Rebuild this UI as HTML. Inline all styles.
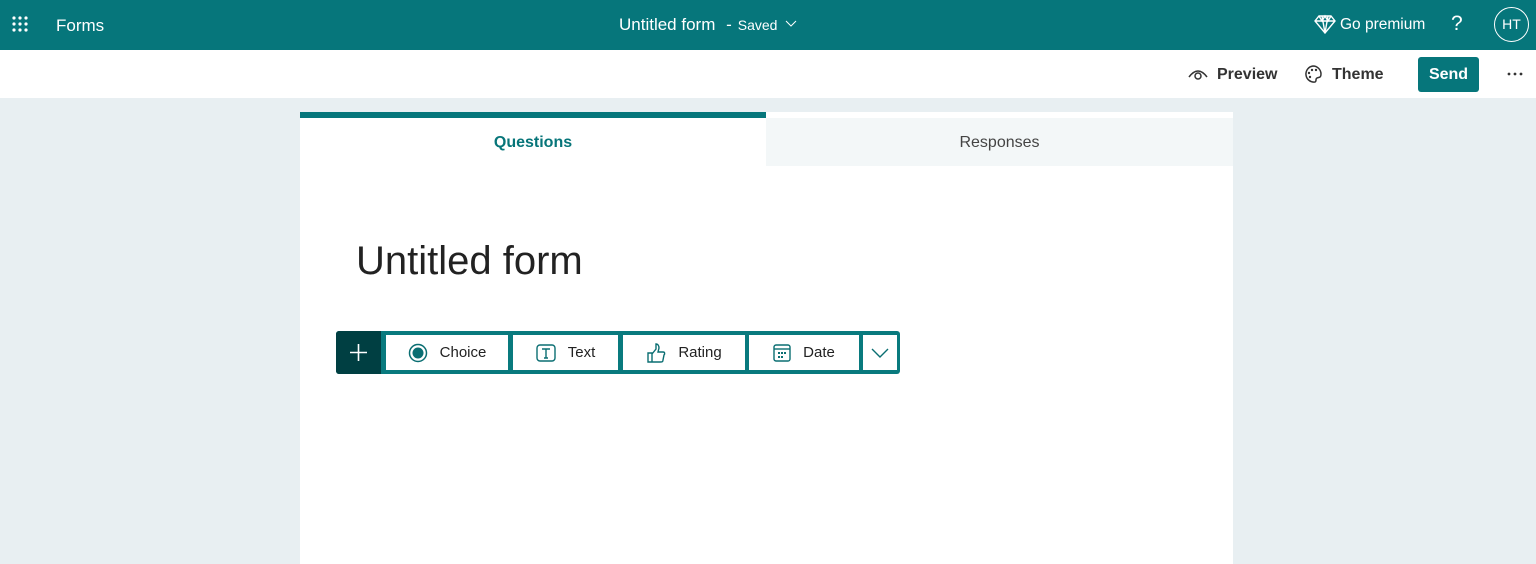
<!DOCTYPE html>
<html><head><style>
*{box-sizing:border-box;margin:0;padding:0}
body{width:1536px;height:564px;overflow:hidden;background:#e8eff2;font-family:"Liberation Sans",sans-serif;position:relative}
.top{position:absolute;left:0;top:0;width:1536px;height:50px;background:#06767b;color:#fff}
.t{position:absolute;white-space:nowrap}
.bar2{position:absolute;left:0;top:50px;width:1536px;height:48px;background:#fff}
.card{position:absolute;left:300px;top:112px;width:933px;height:452px;background:#fff}
.tb{position:absolute;left:336px;top:331px;width:564px;height:43px;background:#097a7e;border-radius:3px}
.btn{position:absolute;top:4px;height:35px;background:#fff;font-size:15px;color:#222;display:flex;align-items:center;justify-content:center;gap:12px}
</style></head><body>
<div class="top">
<svg class="t" style="left:11px;top:15px" width="18" height="18"><g fill="#fff"><circle cx="3" cy="3" r="1.6"/><circle cx="9" cy="3" r="1.6"/><circle cx="15" cy="3" r="1.6"/><circle cx="3" cy="9" r="1.6"/><circle cx="9" cy="9" r="1.6"/><circle cx="15" cy="9" r="1.6"/><circle cx="3" cy="15" r="1.6"/><circle cx="9" cy="15" r="1.6"/><circle cx="15" cy="15" r="1.6"/></g></svg>
<div class="t" style="left:56px;top:16px;font-size:17px">Forms</div>
<div class="t" style="left:619px;top:15px;font-size:17px">Untitled form <span style="margin:0 6px">-</span><span style="font-size:14px">Saved</span></div>
<svg class="t" style="left:785px;top:20px" width="12" height="8"><path d="M1 1l5 5 5-5" stroke="#fff" fill="none"/></svg>
<svg class="t" style="left:1314px;top:14px" width="22" height="20"><path d="M5 2h12l4 5-10 12L1 7z M1 7h20 M8 2l3 17 3-17 M5 2l3 5 3-5 3 5 3-5" stroke="#fff" stroke-width="1.4" fill="none"/></svg>
<div class="t" style="left:1340px;top:16px;font-size:15.5px">Go premium</div>
<div class="t" style="left:1451px;top:12px;font-size:21px">?</div>
<div class="t" style="left:1494px;top:7px;width:35px;height:35px;border:1.5px solid #fff;border-radius:50%;font-size:14px;text-align:center;line-height:32px">HT</div>
</div>
<div class="bar2">
<svg class="t" style="left:1188px;top:18px" width="20" height="12"><path d="M1 9Q10-3 19 9" stroke="#333" stroke-width="1.5" fill="none"/><circle cx="10" cy="8" r="3" stroke="#333" stroke-width="1.5" fill="none"/></svg>
<div class="t" style="left:1217px;top:16px;font-size:16px;font-weight:bold;color:#333">Preview</div>
<svg class="t" style="left:1303px;top:14px" width="20" height="20"><path d="M10 2a8 8 0 1 0 2 16c2-1 0-3 2-4s4 0 4-4a8 8 0 0 0-8-8z" stroke="#333" stroke-width="1.5" fill="none"/><circle cx="6" cy="9" r="1.2" fill="#333"/><circle cx="9" cy="6" r="1.2" fill="#333"/><circle cx="13" cy="6" r="1.2" fill="#333"/><circle cx="7" cy="13" r="1.2" fill="#333"/></svg>
<div class="t" style="left:1332px;top:16px;font-size:16px;font-weight:bold;color:#333">Theme</div>
<div class="t" style="left:1418px;top:7px;width:61px;height:35px;background:#06767b;border-radius:3px;color:#fff;font-weight:bold;font-size:16px;text-align:center;line-height:35px">Send</div>
<svg class="t" style="left:1507px;top:22px" width="16" height="4"><g fill="#333"><circle cx="2" cy="2" r="1.4"/><circle cx="8" cy="2" r="1.4"/><circle cx="14" cy="2" r="1.4"/></g></svg>
</div>
<div class="card">
<div class="t" style="left:0;top:0;width:466px;height:6px;background:#06767b"></div>
<div class="t" style="left:466px;top:6px;width:467px;height:48px;background:#f3f7f8"></div>
<div class="t" style="left:0;top:22px;width:466px;text-align:center;font-size:16px;font-weight:bold;color:#077579">Questions</div>
<div class="t" style="left:466px;top:22px;width:467px;text-align:center;font-size:16px;color:#444">Responses</div>
<div class="t" style="left:56px;top:127px;font-size:40px;color:#222">Untitled form</div>
</div>
<div class="tb">
<div class="t" style="left:0;top:0;width:45px;height:43px;background:#003f42;border-radius:3px 0 0 3px"><svg width="45" height="43"><path d="M22.5 13v17M14 21.5h17" stroke="#fff" stroke-width="1.6"/></svg></div>
<div class="btn" style="left:50px;width:122px"><svg width="20" height="20"><circle cx="10" cy="10" r="8.5" stroke="#0a6e72" stroke-width="1.5" fill="none"/><circle cx="10" cy="10" r="5.5" fill="#0a6e72"/></svg>Choice</div>
<div class="btn" style="left:177px;width:105px"><svg width="20" height="18"><rect x="1" y="1" width="18" height="16" rx="3" stroke="#0a6e72" stroke-width="1.4" fill="none"/><path d="M6 5h8M10 5v9M8 14h4" stroke="#0a6e72" stroke-width="1.4"/></svg>Text</div>
<div class="btn" style="left:287px;width:122px"><svg width="20" height="22"><path d="M2 11h4v9H2z M6 12l4-5V2c2 0 3 2 3 4l-1 4h5c2 0 2 2 1 3l-1 5c0 2-1 2-3 2H6" stroke="#0a6e72" stroke-width="1.4" fill="none"/></svg>Rating</div>
<div class="btn" style="left:413px;width:110px"><svg width="18" height="18"><rect x="1" y="1" width="16" height="16" rx="2" stroke="#0a6e72" stroke-width="1.4" fill="none"/><path d="M1 5h16" stroke="#0a6e72" stroke-width="1.4"/><g fill="#0a6e72"><rect x="5" y="8" width="2" height="2"/><rect x="8" y="8" width="2" height="2"/><rect x="11" y="8" width="2" height="2"/><rect x="5" y="12" width="2" height="2"/><rect x="8" y="12" width="2" height="2"/></g></svg>Date</div>
<div class="btn" style="left:527px;width:34px"><svg width="18" height="10"><path d="M1 1l8 8 8-8" stroke="#0a6e72" stroke-width="1.4" fill="none"/></svg></div>
</div>
</body></html>
